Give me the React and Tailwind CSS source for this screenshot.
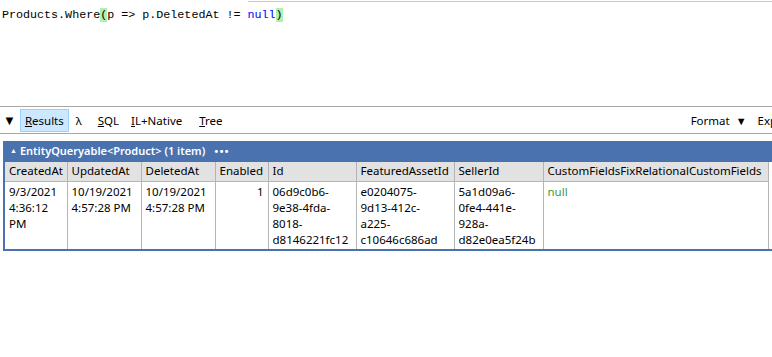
import React from "react";

const ui = { fontFamily: '"Noto Sans", "Segoe UI", Arial, sans-serif' };
const mono = { fontFamily: '"Liberation Mono", "DejaVu Sans Mono", monospace' };

const cols = [
  { name: "CreatedAt", w: 62, val: ["9/3/2021", "4:36:12", "PM"] },
  { name: "UpdatedAt", w: 74, val: ["10/19/2021", "4:57:28 PM"] },
  { name: "DeletedAt", w: 74, val: ["10/19/2021", "4:57:28 PM"] },
  { name: "Enabled", w: 53, val: ["1"], right: true },
  { name: "Id", w: 88, val: ["06d9c0b6-", "9e38-4fda-", "8018-", "d8146221fc12"] },
  { name: "FeaturedAssetId", w: 98, val: ["e0204075-", "9d13-412c-", "a225-", "c10646c686ad"] },
  { name: "SellerId", w: 89, val: ["5a1d09a6-", "0fe4-441e-", "928a-", "d82e0ea5f24b"] },
  { name: "CustomFieldsFixRelationalCustomFields", w: 225, val: ["null"], nul: true },
];

function Tab({ children, active }) {
  return (
    <div
      className={
        "h-[23px] flex items-center px-[4px] border " +
        (active ? "bg-[#cce8ff] border-[#99d1ff]" : "border-transparent")
      }
    >
      {children}
    </div>
  );
}

export default function App() {
  return (
    <div className="w-[772px] h-[357px] bg-white overflow-hidden flex flex-col text-[11.5px] text-black" style={ui}>
      {/* editor */}
      <div className="h-[106px] flex flex-col shrink-0">
        <div className="h-px ml-[248px] bg-[#c8c8c8] mt-px" />
        <div className="pl-[2px] pt-[5px] text-[11.7px] leading-[16px] whitespace-pre" style={mono}>
          Products.Where<span className="bg-[#b0f0b0]">(</span>p =&gt; p.DeletedAt != <span className="text-[#0000ff]">null</span><span className="bg-[#b0f0b0]">)</span>
        </div>
      </div>
      {/* toolbar */}
      <div className="h-[28px] shrink-0 border-t border-b border-[#a8a8a8] flex items-center pt-px">
        <span className="ml-[3px] mr-[4px] text-[13px] leading-none">▼</span>
        <div className="flex items-center gap-[2px]">
          <Tab active><span><u>R</u>esults</span></Tab>
          <Tab><span>λ</span></Tab>
          <div className="w-[2px]" />
          <Tab><span><u>S</u>QL</span></Tab>
          <Tab><span><u>I</u>L+Native</span></Tab>
          <div className="w-[3px]" />
          <Tab><span><u>T</u>ree</span></Tab>
        </div>
        <div className="ml-auto flex items-center whitespace-nowrap">
          <span>Format</span>
          <span className="ml-[6px] text-[11px] leading-none">▼</span>
          <span className="ml-[11px] mr-[-21px]">Export</span>
        </div>
      </div>
      {/* results */}
      <div className="mt-[7px] ml-[3px] w-[800px] border-l-2 border-b-2 border-[#4a72af]">
        <div className="h-[21px] bg-[#4a72af] text-white flex items-center font-semibold text-[11px]">
          <span className="ml-[5px] mr-[3px] text-[7px]">▲</span>
          <span>EntityQueryable&lt;Product&gt; (1 item)</span>
          <span className="ml-[9px] tracking-[1px]">•••</span>
        </div>
        <table className="table-fixed border-collapse w-[763px]">
          <colgroup>
            {cols.map((c) => (
              <col key={c.name} style={{ width: c.w }} />
            ))}
          </colgroup>
          <thead>
            <tr className="h-[19px] bg-[#e2e2e2]">
              {cols.map((c) => (
                <th
                  key={c.name}
                  className="border-r border-b border-[#b4b4b4] px-[4px] py-0 text-left font-normal leading-[18px] whitespace-nowrap overflow-hidden"
                >
                  {c.name}
                </th>
              ))}
            </tr>
          </thead>
          <tbody>
            <tr className="h-[68px]">
              {cols.map((c) => (
                <td
                  key={c.name}
                  className={
                    "border-r border-[#b4b4b4] px-[4px] pt-[2px] align-top leading-[16.3px] " +
                    (c.right ? "text-right " : "") +
                    (c.nul ? "text-[#3c9a3c] " : "")
                  }
                >
                  {c.val.map((v, i) => (
                    <div key={i} className="whitespace-nowrap">{v}</div>
                  ))}
                </td>
              ))}
            </tr>
          </tbody>
        </table>
      </div>
    </div>
  );
}
